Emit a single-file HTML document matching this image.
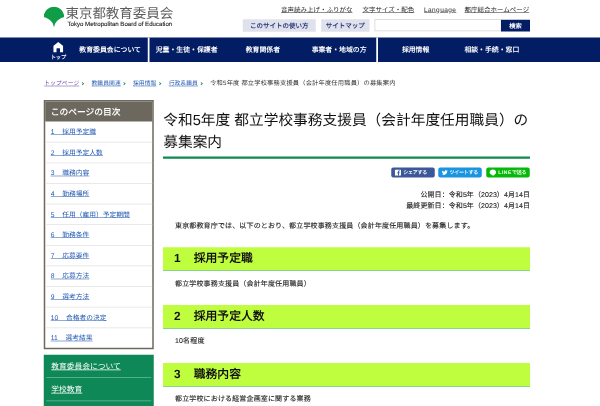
<!DOCTYPE html>
<html lang="ja">
<head>
<meta charset="utf-8">
<title>令和5年度 都立学校事務支援員（会計年度任用職員）の募集案内｜東京都教育委員会</title>
<style>
html,body{margin:0;padding:0;background:#fff;}
body{width:600px;height:406px;overflow:hidden;position:relative;font-family:"Liberation Sans",sans-serif;}
#stage{position:absolute;left:0;top:0;width:2400px;height:1624px;transform:scale(.25);transform-origin:0 0;filter:brightness(1);text-rendering:geometricPrecision;background:#fff;color:#222;overflow:hidden;}
#stage *{box-sizing:border-box;}
.abs{position:absolute;white-space:nowrap;}
a{color:inherit;}
/* header */
#logo-ja{left:262px;top:24px;font-size:54px;line-height:60px;color:#5c5c5c;letter-spacing:-.2px;}
#logo-en{left:270px;top:83px;font-size:24.4px;line-height:28px;color:#222;-webkit-text-stroke:.4px #222;}
.toplink{top:23px;font-size:26px;line-height:28px;color:#222;text-decoration:underline;}
.hbtn{top:77px;height:50px;background:#dfe1eb;color:#25347a;font-weight:bold;font-size:26px;line-height:50px;text-align:center;}
#sbox{left:1498px;top:77px;width:508px;height:48px;border:3px solid #d4d4d4;background:#fff;}
#sbtn{left:2004px;top:79px;width:116px;height:47px;background:#021d63;color:#fff;font-weight:bold;font-size:25px;line-height:47px;text-align:center;}
/* global nav */
#gnav{left:0;top:150px;width:2400px;height:98px;background:#021d63;}
.gi{top:0;height:99px;color:#fff;font-weight:bold;font-size:27.5px;line-height:99px;text-align:center;width:305px;}
.gsep{top:0;width:7px;height:99px;background:#fff;}
.gsep.f{display:none;}
#home-label{left:174px;top:67px;width:120px;font-size:21px;line-height:24px;font-weight:bold;color:#fff;text-align:center;}
/* breadcrumb */
#bc{left:177px;top:318px;font-size:23px;line-height:30px;color:#333;letter-spacing:.4px;}
#bc span{font-size:25px;letter-spacing:.7px;}
#bc a{color:#1e56b0;text-decoration:underline;}
#bc a.v{color:#6b3fa0;}
#bc i{display:inline-block;width:9px;height:9px;border-top:3.5px solid #0e8a4f;border-right:3.5px solid #0e8a4f;transform:rotate(45deg);margin:0 32px 0 8px;position:relative;top:-2px;}
/* sidebar toc */
#toc{left:175px;top:400px;width:440px;height:997px;border:6px solid #6c685e;background:#fff;}
#toc h2{margin:0;height:80px;background:#6c685e;color:#fff;font-size:35px;line-height:82px;padding-left:22px;font-weight:bold;}
#toc ul{list-style:none;margin:0;padding:0;}
#toc li{height:82.5px;border-top:3px solid #e2e2e2;padding-left:22px;font-size:27px;line-height:78px;}
#toc li:first-child{border-top:0;height:81px;}
#toc li a{color:#1e56b0;text-decoration:underline;white-space:pre;word-spacing:-3.2px;}
/* sidebar green */
#side2{left:175px;top:1419px;width:440px;height:240px;background:#0e8857;}
#side2 div{height:93px;border-bottom:3px solid #6dbb98;margin:0 10px;padding-left:20px;font-size:31px;line-height:94px;color:#fff;text-decoration:underline;}
/* main */
#h1{left:653px;top:435px;width:1477px;font-size:58.8px;line-height:88px;color:#111;white-space:normal;}
#h1line{left:652px;top:626px;width:1468px;height:9px;background:#0e8a4f;}
.sns{top:670px;width:174px;height:40px;border-radius:8px;color:#fff;font-weight:bold;font-size:20px;line-height:40px;padding-left:48px;letter-spacing:-1px;}
.sns svg{position:absolute;left:14px;top:8px;width:25px;height:25px;}
.date{right:280px;font-size:28px;line-height:43px;color:#222;text-align:right;letter-spacing:.3px;-webkit-text-stroke:.45px #222;}
.p{left:700px;font-size:28px;line-height:40px;color:#222;letter-spacing:.6px;-webkit-text-stroke:.45px #222;}
.h2{left:652px;width:1468px;height:95px;background:#bffd3f;border-bottom:3px solid #6fcaa0;font-size:47.3px;line-height:88px;font-weight:bold;color:#111;padding-left:44px;white-space:pre;word-spacing:-8px;}
</style>
</head>
<body>
<!-- lang hint below only steers CJK glyph fallback (full-width sans); the document language is Japanese -->
<div id="stage" lang="zh-CN">

<!-- logo -->
<svg class="abs" style="left:175px;top:27px;width:82px;height:83px" viewBox="0 0 82 83">
<path d="M41 0 C63 0 80 17 82 39 C82 41 81 42 79 42 C68 45 55 53 47.500 64 C44.500 69 42.500 76 41 83 C39.500 76 37.500 69 34.500 64 C27 53 14 45 3 42 C1 42 0 41 0 39 C2 17 19 0 41 0Z" fill="#0f9d48"/>
</svg>
<div class="abs" id="logo-ja">東京都教育委員会</div>
<div class="abs" id="logo-en">Tokyo Metropolitan Board of Education</div>

<!-- top links -->
<a class="abs toplink" style="left:1124px">音声読み上げ・ふりがな</a>
<a class="abs toplink" style="left:1450px">文字サイズ・配色</a>
<a class="abs toplink" style="left:1696px;letter-spacing:1.7px">Language</a>
<a class="abs toplink" style="left:1858px">都庁総合ホームページ</a>

<div class="abs hbtn" style="left:971px;width:292px">このサイトの使い方</div>
<div class="abs hbtn" style="left:1285px;width:193px">サイトマップ</div>
<div class="abs" id="sbox"></div>
<div class="abs" id="sbtn">検索</div>

<!-- global nav -->
<div class="abs" id="gnav">
  <svg class="abs" style="left:213px;top:18px;width:40px;height:42px" viewBox="0 0 40 42">
    <path d="M20 0 L40 16 L40 42 L27 42 L27 27 Q27 25 25 25 L15 25 Q13 25 13 27 L13 42 L0 42 L0 16 Z" fill="#fff"/>
  </svg>
  <div class="abs" id="home-label">トップ</div>
  <div class="abs gi" style="left:288px">教育委員会について</div>
  <div class="abs gsep" style="left:591px"></div>
  <div class="abs gi" style="left:594px">児童・生徒・保護者</div>
  <div class="abs gsep f" style="left:897px"></div>
  <div class="abs gi" style="left:899px">教育関係者</div>
  <div class="abs gsep f" style="left:1202px"></div>
  <div class="abs gi" style="left:1204px">事業者・地域の方</div>
  <div class="abs gsep" style="left:1505px"></div>
  <div class="abs gi" style="left:1510px">採用情報</div>
  <div class="abs gsep f" style="left:1813px"></div>
  <div class="abs gi" style="left:1815px">相談・手続・窓口</div>
</div>

<!-- breadcrumb -->
<div class="abs" id="bc"><a class="v">トップページ</a><i></i><a>教職員関連</a><i></i><a>採用情報</a><i></i><a>行政系職員</a><i></i><span>令和5年度 都立学校事務支援員（会計年度任用職員）の募集案内</span></div>

<!-- toc -->
<div class="abs" id="toc">
  <h2>このページの目次</h2>
  <ul>
    <li><a>1　 採用予定職</a></li>
    <li><a>2　 採用予定人数</a></li>
    <li><a>3　 職務内容</a></li>
    <li><a>4　 勤務場所</a></li>
    <li><a>5　 任用（雇用）予定期間</a></li>
    <li><a>6　 勤務条件</a></li>
    <li><a>7　 応募要件</a></li>
    <li><a>8　 応募方法</a></li>
    <li><a>9　 選考方法</a></li>
    <li><a>10　 合格者の決定</a></li>
    <li><a>11　 選考結果</a></li>
  </ul>
</div>

<div class="abs" id="side2">
  <div>教育委員会について</div>
  <div>学校教育</div>
</div>

<!-- main -->
<div class="abs" id="h1">令和5年度 都立学校事務支援員（会計年度任用職員）の募集案内</div>
<div class="abs" id="h1line"></div>

<div class="abs sns" style="left:1565px;background:#3b5998"><svg viewBox="0 0 26 26"><rect width="26" height="26" rx="3" fill="#fff"/><path d="M17.5 26V16h3.3l.5-4h-3.8V9.600c0-1.100.3-1.900 1.900-1.900h2V4.200c-.4 0-1.600-.2-3-.2-3 0-5 1.800-5 5.100V12H10v4h3.400v10z" fill="#3b5998"/></svg>シェアする</div>
<div class="abs sns" style="left:1753px;background:#1b95e0;padding-left:45px"><svg viewBox="0 0 26 26"><path d="M25 5.500c-.9.400-1.900.700-2.900.800 1-.6 1.800-1.600 2.200-2.800-1 .6-2.100 1-3.200 1.200a5 5 0 0 0-8.600 4.600C8.300 9.100 4.600 7.100 2.100 4a5 5 0 0 0 1.600 6.700c-.8 0-1.600-.2-2.300-.6v.1a5 5 0 0 0 4 4.900c-.7.200-1.500.2-2.300.1a5 5 0 0 0 4.700 3.500A10.100 10.100 0 0 1 .500 20.800 14.200 14.200 0 0 0 8.200 23c9.300 0 14.300-7.700 14.300-14.300v-.7c1-.7 1.800-1.600 2.500-2.500z" fill="#fff"/></svg>ツイートする</div>
<div class="abs sns" style="left:1945px;background:#06b908"><svg viewBox="0 0 26 26" style="left:12px;top:6px;width:29px;height:29px"><path d="M13 2C6.400 2 1 6.300 1 11.600c0 4.700 4.200 8.700 9.900 9.500.4.100.9.300 1 .6.100.3.100.8 0 1.100l-.2 1c0 .3-.2 1.200 1 .6 1.300-.5 6.800-4 9.300-6.900 1.700-1.900 2.500-3.800 2.500-5.900C25 6.300 19.600 2 13 2z" fill="#fff"/></svg><span style="letter-spacing:2.3px">LINE</span>で送る</div>

<div class="abs date" style="top:757px">公開日：令和5年（2023）4月14日</div>
<div class="abs date" style="top:800px">最終更新日：令和5年（2023）4月14日</div>

<div class="abs p" style="top:884px">東京都教育庁では、以下のとおり、都立学校事務支援員（会計年度任用職員）を募集します。</div>

<div class="abs h2" style="top:989px">1　 採用予定職</div>
<div class="abs p" style="top:1113px">都立学校事務支援員（会計年度任用職員）</div>

<div class="abs h2" style="top:1220px">2　 採用予定人数</div>
<div class="abs p" style="top:1344px">10名程度</div>

<div class="abs h2" style="top:1452px">3　 職務内容</div>
<div class="abs p" style="top:1575px">都立学校における経営企画室に関する業務</div>

</div>
</body>
</html>
